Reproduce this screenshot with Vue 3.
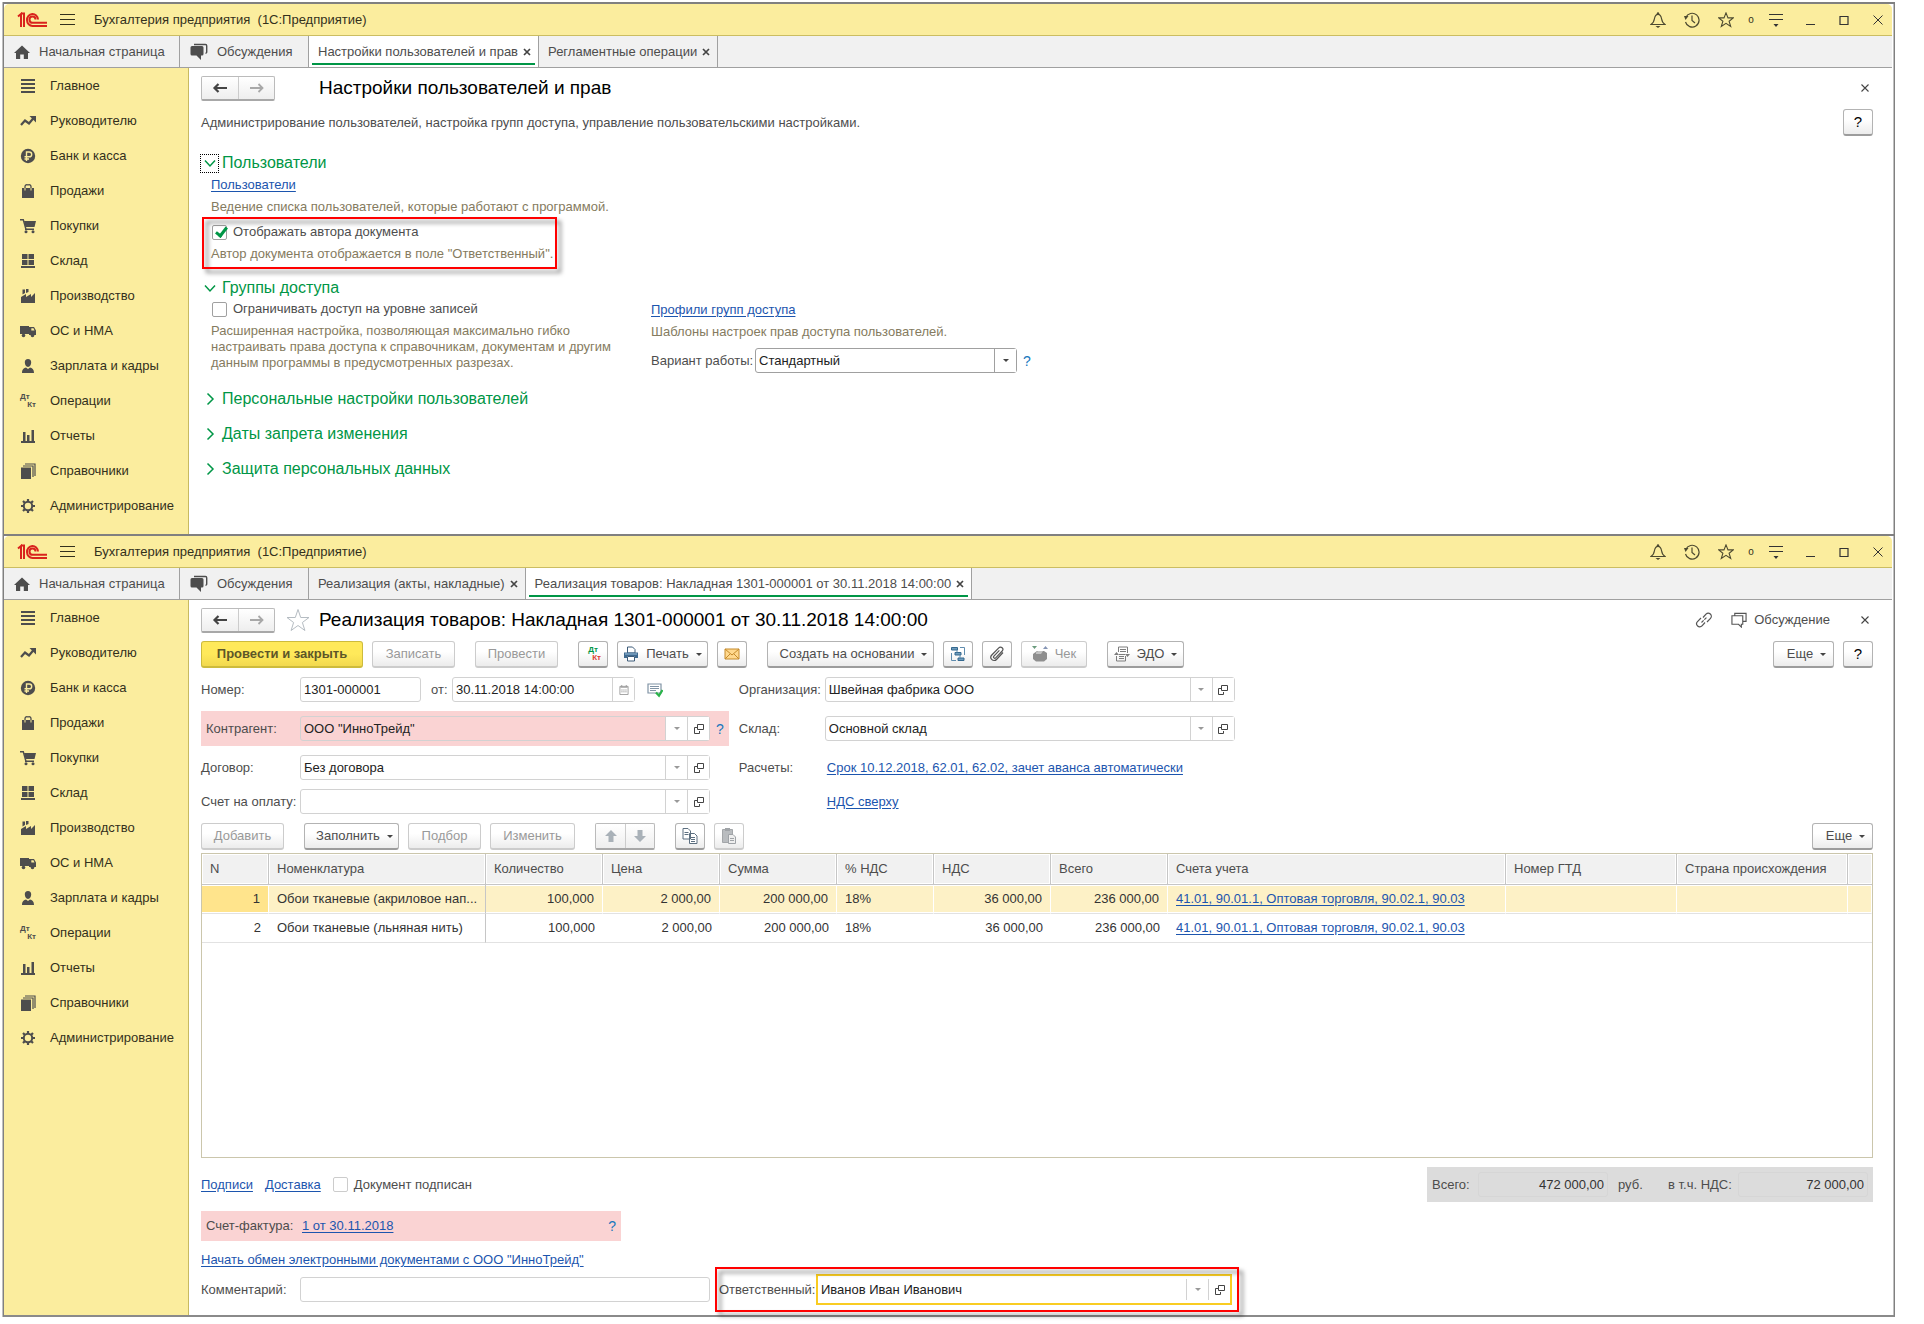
<script setup>
const sections = [
  { icon: 'lines', text: 'Главное' },
  { icon: 'trend', text: 'Руководителю' },
  { icon: 'ruble', text: 'Банк и касса' },
  { icon: 'bag', text: 'Продажи' },
  { icon: 'cart', text: 'Покупки' },
  { icon: 'boxes', text: 'Склад' },
  { icon: 'factory', text: 'Производство' },
  { icon: 'truck', text: 'ОС и НМА' },
  { icon: 'person', text: 'Зарплата и кадры' },
  { icon: 'dtkt', text: 'Операции' },
  { icon: 'chart', text: 'Отчеты' },
  { icon: 'books', text: 'Справочники' },
  { icon: 'gear', text: 'Администрирование' },
]

const windows = [
  {
    id: 'settings',
    tabs: [
      { text: 'Начальная страница', icon: 'home' },
      { text: 'Обсуждения', icon: 'chat' },
      { text: 'Настройки пользователей и прав', closable: true, active: true },
      { text: 'Регламентные операции', closable: true },
    ],
  },
  {
    id: 'document',
    tabs: [
      { text: 'Начальная страница', icon: 'home' },
      { text: 'Обсуждения', icon: 'chat' },
      { text: 'Реализация (акты, накладные)', closable: true },
      { text: 'Реализация товаров: Накладная 1301-000001 от 30.11.2018 14:00:00', closable: true, active: true },
    ],
  },
]

const tools = ['bell', 'history', 'star']
const controls = ['service', 'minimize', 'maximize', 'close']

const collapsed = ['Персональные настройки пользователей', 'Даты запрета изменения', 'Защита персональных данных']

const leftFields = [
  { id: 'partner', label: 'Контрагент:', value: 'ООО "ИнноТрейд"', alert: true },
  { id: 'contract', label: 'Договор:', value: 'Без договора' },
  { id: 'invoice', label: 'Счет на оплату:', value: '' },
]
const rightFields = [
  { id: 'org', label: 'Организация:', value: 'Швейная фабрика ООО' },
  { id: 'store', label: 'Склад:', value: 'Основной склад' },
]

const columns = [
  { title: 'N', width: 67 },
  { title: 'Номенклатура', width: 217 },
  { title: 'Количество', width: 117 },
  { title: 'Цена', width: 117 },
  { title: 'Сумма', width: 117 },
  { title: '% НДС', width: 97 },
  { title: 'НДС', width: 117 },
  { title: 'Всего', width: 117 },
  { title: 'Счета учета', width: 338 },
  { title: 'Номер ГТД', width: 171 },
  { title: 'Страна происхождения', width: 171 },
  { title: '', width: 24 },
]
const accounts = '41.01, 90.01.1, Оптовая торговля, 90.02.1, 90.03'
const rows = [
  { n: 1, name: 'Обои тканевые (акриловое нап...', selected: true },
  { n: 2, name: 'Обои тканевые (льняная нить)' },
]
</script>

<template>
  <svg class="sprite" aria-hidden="true">
    <symbol id="logo" viewBox="0 0 30 16">
      <g fill="none" stroke="#d9231d" stroke-width="2">
        <path d="M1 4.500L4 2h0v13" />
        <path d="M4 1.500h3V15" />
        <path d="M21 7.500a5.500 6 0 1 0-5.500 6.500H30" />
        <path d="M18.500 7.500a3 3.200 0 1 0-3 3.300H30" />
      </g>
    </symbol>
    <symbol id="lines" viewBox="0 0 16 16"><path fill="#4d4d4d" d="M1 1h14v2H1zM1 5h14v2H1zM1 9h14v2H1zM1 13h14v2H1z" /></symbol>
    <symbol id="trend" viewBox="0 0 16 16">
      <path d="M1 12l4-4.500 4 3 5-6" fill="none" stroke="#4d4d4d" stroke-width="2.200" /><path fill="#4d4d4d" d="M9.500 3H16v6.500z" />
    </symbol>
    <symbol id="ruble" viewBox="0 0 16 16">
      <circle cx="8" cy="8" r="7.200" fill="#4d4d4d" />
      <path d="M6.500 13V4h2.800a2.300 2.300 0 0 1 0 4.800H4.500M4.500 11H9" fill="none" stroke="#faec9d" stroke-width="1.400" />
    </symbol>
    <symbol id="bag" viewBox="0 0 16 16">
      <path fill="#4d4d4d" d="M2 5h12v10H2z" /><path d="M5 7V3.500a2 2 0 0 1 3-1.500 2 2 0 0 1 3 1.500V7" fill="none" stroke="#4d4d4d" stroke-width="1.300" />
      <path d="M5 5v2.500M11 5v2.500" stroke="#faec9d" />
    </symbol>
    <symbol id="cart" viewBox="0 0 16 16">
      <path fill="#4d4d4d" d="M4 3h12l-1.500 6H5.500zM5 10.500h9V12H5z" /><path d="M0 1.800h3.300L6 11.500" fill="none" stroke="#4d4d4d" stroke-width="1.400" />
      <circle cx="6" cy="13.800" r="1.500" fill="#4d4d4d" /><circle cx="13" cy="13.800" r="1.500" fill="#4d4d4d" />
    </symbol>
    <symbol id="boxes" viewBox="0 0 16 16"><path fill="#4d4d4d" d="M2 1h5.500v5H2zM8.500 1H14v5H8.500zM2 7h5.500v5H2zM8.500 7H14v5H8.500zM1 13h14v2H1z" /></symbol>
    <symbol id="factory" viewBox="0 0 16 16"><path fill="#4d4d4d" d="M1 15V9l5-3v3l5-3v3l4-4v10zM2.500 1.500H5V5L2.500 6.500zM6 1h2.500v3L6 5z" /></symbol>
    <symbol id="truck" viewBox="0 0 16 16">
      <path fill="#4d4d4d" d="M0 3h9v8H0zM9 4h5l2 3.500V12H9z" /><path fill="#faec9d" d="M11.300 5.300h2.200l1 2.200h-3.200z" />
      <circle cx="3.500" cy="12.500" r="1.800" fill="#4d4d4d" /><circle cx="12.500" cy="12.500" r="1.800" fill="#4d4d4d" />
    </symbol>
    <symbol id="person" viewBox="0 0 16 16"><path fill="#4d4d4d" d="M8 1c2.200 0 3.200 1.500 3.200 3.300C11.200 6.500 10 9 8 9S4.800 6.500 4.800 4.300C4.800 2.500 5.800 1 8 1zM2 15c0-4 2-5 4-5.500L8 11l2-1.500c2 .5 4 1.500 4 5.500z" /></symbol>
    <symbol id="chart" viewBox="0 0 16 16"><path fill="#4d4d4d" d="M3 4h2.500v9H3zM7 7h2.500v6H7zM11.500 2H14v11h-2.500zM1 13h14v2H1z" /></symbol>
    <symbol id="books" viewBox="0 0 16 16"><path fill="#4d4d4d" d="M1 4.500h10V16H1z" /><path d="M3 3h10v11M5 1h10v12" fill="none" stroke="#4d4d4d" stroke-width="1.200" /></symbol>
    <symbol id="gear" viewBox="0 0 16 16">
      <circle cx="8" cy="8" r="4.200" fill="none" stroke="#4d4d4d" stroke-width="2" />
      <path d="M8 1v3M8 12v3M1 8h3M12 8h3M3 3l2 2M11 11l2 2M3 13l2-2M11 5l2-2" stroke="#4d4d4d" stroke-width="2.200" />
    </symbol>
    <symbol id="home" viewBox="0 0 16 16"><path fill="#4d4d4d" d="M8 1.500L16 9h-2v6H9.800v-4.500H6.200V15H2V9H0z" /></symbol>
    <symbol id="chat" viewBox="0 0 18 18">
      <path fill="#4d4d4d" d="M2 3h10a1.500 1.500 0 0 1 1.500 1.500V11A1.500 1.500 0 0 1 12 12.500h-1V17l-4.500-4.500H2A1.500 1.500 0 0 1 .5 11V4.500A1.500 1.500 0 0 1 2 3z" />
      <path d="M4 1.500h11.500A1.200 1.200 0 0 1 16.700 2.700V9a1.200 1.200 0 0 1-1.200 1.200" fill="none" stroke="#4d4d4d" stroke-width="1.400" />
    </symbol>
    <symbol id="bell" viewBox="0 0 16 16">
      <path d="M1 12.500c2.500-1.500 3-3 3.500-6C5 3.500 6 2.300 8 2.300s3 1.200 3.500 4.200c.5 3 1 4.500 3.500 6z" fill="none" stroke="#4d4a30" stroke-width="1.200" />
      <circle cx="8" cy="1.500" r="1.200" fill="#4d4a30" /><path fill="#4d4a30" d="M5.500 14h5L8 16z" />
    </symbol>
    <symbol id="history" viewBox="0 0 16 16">
      <path d="M1.800 5.500a6.900 6.900 0 1 1-.3 4.500" fill="none" stroke="#4d4a30" stroke-width="1.200" /><path d="M8 3.500V8.500l3 2.500" fill="none" stroke="#4d4a30" stroke-width="1.200" />
      <path fill="#4d4a30" d="M0 4h4.500L1.500 8z" />
    </symbol>
    <symbol id="star" viewBox="0 0 16 16"><path d="M8 .9l2 5h5.300l-4.200 3.300 1.600 5.300L8 11.400l-4.700 3.100 1.600-5.300L.7 5.900H6z" fill="none" stroke="#4d4a30" stroke-width="1.100" /></symbol>
    <symbol id="bigstar" viewBox="0 0 24 24"><path d="M12 1.500l2.700 8h8.300l-6.600 5 2.500 8-6.900-5-6.900 5 2.500-8-6.600-5h8.300z" fill="none" stroke="#b5bcc2" /></symbol>
    <symbol id="service" viewBox="0 0 16 16"><path fill="#333" d="M1 2h14v1H1zM1 7h14v1H1zM5.500 12h5L8 15z" /></symbol>
    <symbol id="minimize" viewBox="0 0 16 16"><path fill="#333" d="M4 12h9v1H4z" /></symbol>
    <symbol id="maximize" viewBox="0 0 16 16"><path d="M4 4.500h8v8H4z" fill="none" stroke="#333" stroke-width="1.200" /></symbol>
    <symbol id="close" viewBox="0 0 16 16"><path d="M3.500 3.500l9 9M12.500 3.500l-9 9" stroke="#333" /></symbol>
    <symbol id="x" viewBox="0 0 8 8"><path d="M1 1l6 6M7 1L1 7" stroke="#444" stroke-width="1.700" /></symbol>
    <symbol id="xthin" viewBox="0 0 8 8"><path d="M.5 .5l7 7M7.500 .5l-7 7" stroke="#444" stroke-width="1.100" /></symbol>
    <symbol id="back" viewBox="0 0 16 16"><path d="M2 8h13M6.500 4L2.500 8l4 4" fill="none" stroke="#444" stroke-width="2.200" /></symbol>
    <symbol id="forward" viewBox="0 0 16 16"><path d="M1 8h13M9.500 4l4 4-4 4" fill="none" stroke="#a8a8a8" stroke-width="1.800" /></symbol>
    <symbol id="down" viewBox="0 0 14 14"><path d="M2 4.500L7 10l5-5.500" fill="none" stroke="#009646" stroke-width="1.500" /></symbol>
    <symbol id="right" viewBox="0 0 14 14"><path d="M4.500 1.500L10 7l-5.500 5.500" fill="none" stroke="#009646" stroke-width="1.500" /></symbol>
    <symbol id="open" viewBox="0 0 10 10"><path d="M3.500 .5h6v5h-6zM3 3.500H.5v6h5V7" fill="none" stroke="#444" /></symbol>
    <symbol id="calendar" viewBox="0 0 10 11"><path d="M.5 1.500h9v9h-9z" fill="none" stroke="#999" /><path d="M1 2.500h8M2.500 0v2M7.500 0v2" stroke="#999" /><path d="M2 5.500h6M2 7.500h6" stroke="#999" stroke-dasharray="1.500 .7" /></symbol>
    <symbol id="posted" viewBox="0 0 16 14">
      <path d="M1 1h13v9H1z" fill="#fff" stroke="#8093a5" stroke-width="1.200" /><path d="M3 3.500h9M3 5.500h9M3 7.500h6" stroke="#8093a5" />
      <path d="M9 9.500l3 3.200L15.500 7" fill="none" stroke="#2ab34a" stroke-width="2.200" />
    </symbol>
    <symbol id="print" viewBox="0 0 16 16">
      <path d="M4.500 1h5l2.500 2.500V7h-7.500z" fill="#fff" stroke="#3d5b78" /><path fill="#3f6a90" d="M1 6.500h14V12h-3v-2H4v2H1z" /><path d="M4.500 10.500h7V15h-7z" fill="#fff" stroke="#3d5b78" />
      <path d="M2 8h12" stroke="#9cc0dd" />
    </symbol>
    <symbol id="mail" viewBox="0 0 16 12"><path d="M1 1h14v10H1z" fill="#ffd98e" stroke="#c58a2b" /><path d="M1 1l7 6 7-6M1 11l5-5M15 11l-5-5" fill="none" stroke="#c58a2b" /></symbol>
    <symbol id="tree" viewBox="0 0 16 16">
      <path fill="#6f9cbc" stroke="#34688f" d="M1.500 1.500h6v2.500h-6zM5 6.500h6v2.500H5zM8 12h6v2.500H8z" />
      <path d="M10 1.500h4.500V9M1.500 7v7.500H6M7 4v2.500M10 9v3" fill="none" stroke="#5f8cae" />
    </symbol>
    <symbol id="clip" viewBox="0 0 16 16"><path d="M14 6.500l-6.500 7a3.200 3.200 0 0 1-4.700-4.500l7-7.200a2.300 2.300 0 0 1 3.400 3.200l-6.500 6.800a1.200 1.200 0 0 1-1.800-1.700l5.500-5.800" fill="none" stroke="#555" stroke-width="1.200" /></symbol>
    <symbol id="receipt" viewBox="0 0 16 16">
      <path fill="#8f8f8f" d="M1 8l4-3h7l3 2v6l-3 2.500H4L1 13z" /><path fill="#c4c4c4" d="M4 6.500l2-1.500h5l-2 3H4z" /><path fill="#6b9b7d" d="M0 0h5L2.500 3z" /><path fill="#8595b5" d="M11 3h5l-2.500-3z" />
    </symbol>
    <symbol id="edo" viewBox="0 0 16 16">
      <path d="M4.500 6V1h9v6M2.500 10v5h9V10" fill="none" stroke="#7d7d7d" /><path d="M6 3.500h6M6 5.500h6M5 8.500h6M5 10.500h5M5 12.500h5" stroke="#7d7d7d" /><path fill="#7d7d7d" d="M0 9l2.500-3L5 9zM11 8h5l-2.500 3z" />
    </symbol>
    <symbol id="up" viewBox="0 0 12 14"><path fill="#a9b1b8" d="M6 1l6 6H8.500v6h-5V7H0z" /></symbol>
    <symbol id="dn" viewBox="0 0 12 14"><path fill="#a9b1b8" d="M6 13l6-6H8.500V1h-5v6H0z" /></symbol>
    <symbol id="copy" viewBox="0 0 16 16"><path d="M1 .5h5L8.500 3v8H1zM7.500 5.500h5L15 8v7.500H7.500z" fill="#fff" stroke="#5c6f80" /><path d="M2.500 4.500h4M2.500 6.500h4M9 9.500h4M9 11.500h4M9 13.500h4" stroke="#5c6f80" /></symbol>
    <symbol id="paste" viewBox="0 0 16 16"><path fill="#b9bcbf" stroke="#a3a6a9" d="M1.500 1.500h10v13h-10z" /><path fill="#9fa3a7" d="M4 0h5v3H4z" /><path d="M7.500 6.500h4.500L14.500 9v6.500h-7z" fill="#eee" stroke="#9fa3a7" /><path d="M9 10.500h4M9 12.500h4" stroke="#9fa3a7" /></symbol>
    <symbol id="link" viewBox="0 0 18 18">
      <path d="M8 6.500l3-3.300a3 3 0 0 1 4.500 4.200L12 11M10 11.500l-3 3.300a3 3 0 0 1-4.500-4.200L6 7" fill="none" stroke="#555" stroke-width="1.200" />
      <path d="M6.500 11.500l5-5" stroke="#555" stroke-width="1.200" stroke-dasharray="3 1" />
    </symbol>
    <symbol id="talk" viewBox="0 0 17 17"><path d="M1 4h11.500v9H11v3l-3-3H1zM4 4V1.500h12V10h-3.500" fill="none" stroke="#555" stroke-width="1.200" /></symbol>
  </svg>

  <div class="desk">
    <section v-for="win in windows" :key="win.id" class="window">
      <header class="titlebar">
        <svg class="logo"><use href="#logo" /></svg>
        <button class="flat burger" aria-label="Меню"><i></i><i></i><i></i></button>
        <span class="app-name">Бухгалтерия предприятия&nbsp; (1С:Предприятие)</span>
        <div class="tools">
          <button v-for="t in tools" :key="t" class="flat" :aria-label="t"><svg><use :href="'#' + t" /></svg></button>
          <span class="zero">o</span>
          <button v-for="t in controls" :key="t" class="flat" :aria-label="t"><svg><use :href="'#' + t" /></svg></button>
        </div>
      </header>

      <nav class="tabs">
        <div v-for="tab in win.tabs" :key="tab.text" class="tab" :class="[{ active: tab.active, pinned: tab.icon }, tab.icon && 'tab-' + tab.icon]">
          <svg v-if="tab.icon" :class="tab.icon"><use :href="'#' + tab.icon" /></svg>
          <span>{{ tab.text }}</span>
          <button v-if="tab.closable" class="flat" aria-label="Закрыть"><svg><use href="#x" /></svg></button>
        </div>
      </nav>

      <div class="body">
        <aside class="sections">
          <a v-for="s in sections" :key="s.text" href="#">
            <span v-if="s.icon === 'dtkt'" class="dtkt"><b>Дт</b><b>Кт</b></span>
            <svg v-else><use :href="'#' + s.icon" /></svg>
            <span>{{ s.text }}</span>
          </a>
        </aside>

        <main v-if="win.id === 'settings'" class="page">
          <div class="heading">
            <div class="nav"><button aria-label="Назад"><svg><use href="#back" /></svg></button><button aria-label="Вперед"><svg><use href="#forward" /></svg></button></div>
            <h1 class="no-star">Настройки пользователей и прав</h1>
            <button class="flat close" aria-label="Закрыть"><svg><use href="#xthin" /></svg></button>
          </div>
          <div class="intro">
            <p>Администрирование пользователей, настройка групп доступа, управление пользовательскими настройками.</p>
            <button class="btn help">?</button>
          </div>

          <h2 class="first"><span class="focus"><svg><use href="#down" /></svg></span>Пользователи</h2>
          <div class="group">
            <p><a href="#">Пользователи</a></p>
            <p class="hint">Ведение списка пользователей, которые работают с программой.</p>
            <div class="marked">
              <label class="check"><input type="checkbox" checked />Отображать автора документа</label>
              <p class="hint">Автор документа отображается в поле "Ответственный".</p>
            </div>
          </div>

          <h2 class="second-head"><span><svg><use href="#down" /></svg></span>Группы доступа</h2>
          <div class="group split">
            <div class="restrict">
              <label class="check"><input type="checkbox" />Ограничивать доступ на уровне записей</label>
              <p class="hint long">Расширенная настройка, позволяющая максимально гибко настраивать права доступа к справочникам, документам и другим данным программы в предусмотренных разрезах.</p>
            </div>
            <div class="profiles">
              <p><a href="#">Профили групп доступа</a></p>
              <p class="hint">Шаблоны настроек прав доступа пользователей.</p>
              <div class="variant">
                <label for="variant">Вариант работы:</label>
                <div class="field strong">
                  <select id="variant"><option>Стандартный</option></select>
                  <span class="side"><i class="caret"></i></span>
                </div>
                <span class="q">?</span>
              </div>
            </div>
          </div>
          <h2 v-for="c in collapsed" :key="c" class="closed"><span><svg><use href="#right" /></svg></span>{{ c }}</h2>
        </main>

        <main v-else class="page">
          <div class="heading">
            <div class="nav"><button aria-label="Назад"><svg><use href="#back" /></svg></button><button aria-label="Вперед"><svg><use href="#forward" /></svg></button></div>
            <svg class="bigstar"><use href="#bigstar" /></svg>
            <h1>Реализация товаров: Накладная 1301-000001 от 30.11.2018 14:00:00</h1>
            <svg class="chain"><use href="#link" /></svg>
            <button class="flat talk"><svg><use href="#talk" /></svg>Обсуждение</button>
            <button class="flat close" aria-label="Закрыть"><svg><use href="#xthin" /></svg></button>
          </div>

          <div class="toolbar commands">
            <button class="btn primary">Провести и закрыть</button>
            <button class="btn w83" disabled>Записать</button>
            <button class="btn w83 gap" disabled>Провести</button>
            <button class="btn icon gap" aria-label="Проводки"><span class="dtkt color"><b>Дт</b><b>Кт</b></span></button>
            <button class="btn w91"><svg><use href="#print" /></svg>Печать<i class="caret"></i></button>
            <button class="btn icon" aria-label="Письмо"><svg><use href="#mail" /></svg></button>
            <button class="btn create menu gap">Создать на основании<i class="caret"></i></button>
            <button class="btn icon" aria-label="Структура"><svg><use href="#tree" /></svg></button>
            <button class="btn icon" aria-label="Файлы"><svg><use href="#clip" /></svg></button>
            <button class="btn w66" disabled><svg><use href="#receipt" /></svg>Чек</button>
            <button class="btn w77 gap"><svg><use href="#edo" /></svg>ЭДО<i class="caret"></i></button>
            <button class="btn more menu">Еще<i class="caret"></i></button>
            <button class="btn help">?</button>
          </div>

          <div class="form">
            <div class="column">
              <div class="row">
                <label for="number">Номер:</label>
                <div class="field number"><input id="number" value="1301-000001" /></div>
                <label for="date" class="from">от:</label>
                <div class="field date"><input id="date" value="30.11.2018 14:00:00" /><button class="side" aria-label="Календарь"><svg><use href="#calendar" /></svg></button></div>
                <svg class="posted"><use href="#posted" /></svg>
              </div>
              <div v-for="f in leftFields" :key="f.id" class="row" :class="{ alert: f.alert }">
                <label :for="f.id">{{ f.label }}</label>
                <div class="field wide">
                  <input :id="f.id" :value="f.value" />
                  <button class="side" aria-label="Выбрать"><i class="caret dim"></i></button>
                  <button class="side" aria-label="Открыть"><svg><use href="#open" /></svg></button>
                </div>
                <span v-if="f.alert" class="q">?</span>
              </div>
            </div>
            <div class="column second">
              <div v-for="f in rightFields" :key="f.id" class="row" :class="{ tall: f.id === 'store' }">
                <label :for="f.id">{{ f.label }}</label>
                <div class="field wide">
                  <input :id="f.id" :value="f.value" />
                  <button class="side" aria-label="Выбрать"><i class="caret dim"></i></button>
                  <button class="side" aria-label="Открыть"><svg><use href="#open" /></svg></button>
                </div>
              </div>
              <div class="row"><span class="caption">Расчеты:</span><a href="#">Срок 10.12.2018, 62.01, 62.02, зачет аванса автоматически</a></div>
              <div class="row"><span class="caption"></span><a href="#">НДС сверху</a></div>
            </div>
          </div>

          <div class="toolbar">
            <button class="btn w83" disabled>Добавить</button>
            <button class="btn w95 menu gap">Заполнить<i class="caret"></i></button>
            <button class="btn w73" disabled>Подбор</button>
            <button class="btn w85" disabled>Изменить</button>
            <div class="pair gap"><button disabled aria-label="Вверх"><svg><use href="#up" /></svg></button><button disabled aria-label="Вниз"><svg><use href="#dn" /></svg></button></div>
            <button class="btn icon gap" aria-label="Копировать"><svg><use href="#copy" /></svg></button>
            <button class="btn icon" disabled aria-label="Вставить"><svg><use href="#paste" /></svg></button>
            <button class="btn more menu">Еще<i class="caret"></i></button>
          </div>

          <div class="grid">
            <table>
              <colgroup><col v-for="c in columns" :key="c.title" :style="{ width: c.width + 'px' }" /></colgroup>
              <thead><tr><th v-for="c in columns" :key="c.title">{{ c.title }}</th></tr></thead>
              <tbody>
                <tr v-for="r in rows" :key="r.n" :class="{ selected: r.selected }">
                  <td class="num">{{ r.n }}</td>
                  <td class="name">{{ r.name }}</td>
                  <td class="num">100,000</td>
                  <td class="num">2 000,00</td>
                  <td class="num">200 000,00</td>
                  <td>18%</td>
                  <td class="num">36 000,00</td>
                  <td class="num">236 000,00</td>
                  <td><a href="#">{{ accounts }}</a></td>
                  <td></td>
                  <td></td>
                  <td></td>
                </tr>
              </tbody>
            </table>
          </div>

          <div class="summary">
            <a href="#">Подписи</a>
            <a href="#">Доставка</a>
            <label class="check pale"><input type="checkbox" />Документ подписан</label>
            <div class="totals">
              <label for="total">Всего:</label>
              <input id="total" value="472 000,00" readonly />
              <span class="currency">руб.</span>
              <label for="vat">в т.ч. НДС:</label>
              <input id="vat" value="72 000,00" readonly />
            </div>
          </div>

          <div class="factura"><span class="caption">Счет-фактура:</span><a href="#">1 от 30.11.2018</a><span class="q">?</span></div>
          <p class="exchange"><a href="#">Начать обмен электронными документами с ООО "ИнноТрейд"</a></p>
          <div class="row last">
            <label for="comment">Комментарий:</label>
            <div class="field wide"><input id="comment" value="" /></div>
            <div class="responsible">
              <label for="author">Ответственный:</label>
              <div class="field focused">
                <input id="author" value="Иванов Иван Иванович" />
                <button class="side" aria-label="Выбрать"><i class="caret dim"></i></button>
                <button class="side" aria-label="Открыть"><svg><use href="#open" /></svg></button>
              </div>
            </div>
          </div>
        </main>
      </div>
    </section>
  </div>
</template>

<style>
body {
  margin: 0;
  background: #fff;
}
</style>

<style scoped>
* {
  box-sizing: border-box;
}
.sprite {
  position: absolute;
  width: 0;
  height: 0;
}
.desk {
  padding: 2px 29px 7px 3px;
  font: 13px/16px "Liberation Sans", Arial, sans-serif;
  color: #4d4d4d;
}
.window {
  border: 1px solid #808080;
  border-top-width: 2px;
  border-bottom: 0;
  padding-right: 2px;
  box-shadow: -1px 0 #c0c0c0, inset -1px 0 #c0c0c0;
}
.window:last-child {
  border-bottom: 2px solid #8a8a8a;
}
button,
input,
select {
  font: inherit;
  color: inherit;
}
button {
  padding: 0;
}
p,
h1,
h2 {
  margin: 0;
  font-weight: normal;
}
svg {
  display: block;
  width: 16px;
  height: 16px;
  flex: none;
}
a {
  color: #1c55ae;
  text-underline-offset: 2px;
}
.flat {
  border: 0;
  background: none;
}

.titlebar {
  display: flex;
  align-items: center;
  height: 32px;
  padding: 0 6px 0 13px;
  background: #fbed9e;
  border-bottom: 1px solid #cbbd62;
  border-radius: 5px 5px 0 0;
  color: #33301c;
}
.logo {
  width: 30px;
}
.burger {
  display: flex;
  flex-direction: column;
  gap: 4px;
  width: 15px;
  margin: 0 19px 0 13px;
}
.burger i {
  height: 1px;
  background: #33301c;
}
.tools {
  display: flex;
  align-items: center;
  gap: 18px;
  margin-left: auto;
}
.zero {
  width: 8px;
  margin: 0 -5px;
  font-size: 10px;
  text-align: center;
}
.tabs {
  display: flex;
  height: 32px;
  background: #f1f1f1;
  border-bottom: 1px solid #a0a0a0;
}
.tab {
  display: flex;
  align-items: center;
  gap: 5px;
  padding: 0 7px 0 9px;
  border-right: 1px solid #a0a0a0;
  white-space: nowrap;
}
.tab.pinned {
  gap: 9px;
  padding: 0 0 0 10px;
}
.tab-home {
  width: 176px;
}
.tab-chat {
  width: 129px;
}
.tab .chat {
  width: 18px;
  height: 18px;
}
.tab .flat svg {
  width: 8px;
  height: 8px;
}
.tab.active {
  position: relative;
  background: #fff;
}
.tab.active::after {
  content: "";
  position: absolute;
  left: 3px;
  right: 3px;
  bottom: 2px;
  height: 2px;
  background: #009646;
}

.body {
  display: flex;
}
.sections {
  flex: none;
  width: 185px;
  padding: 0 0 11px;
  background: #fbed9e;
  border-right: 1px solid #c8ba60;
}
.sections a {
  display: flex;
  align-items: center;
  gap: 14px;
  height: 35px;
  padding-left: 16px;
  color: #33301c;
  text-decoration: none;
  white-space: nowrap;
}
.dtkt {
  display: flex;
  flex-direction: column;
  width: 16px;
  font-size: 8px;
  line-height: 8px;
  color: #4d4d4d;
}
.dtkt b:last-child {
  align-self: flex-end;
}
.dtkt.color b:first-child {
  color: #009646;
}
.dtkt.color b:last-child {
  color: #e03c31;
}

.page {
  flex: 1;
  min-width: 0;
  padding: 7px 19px 2px 12px;
}
.heading {
  display: flex;
  align-items: center;
  height: 26px;
}
.nav,
.pair {
  display: flex;
  height: 25px;
  border: 1px solid #bbb;
  border-bottom: 2px solid #a8a8a8;
  border-radius: 2px;
  background: linear-gradient(#fff, #eee);
}
.nav button,
.pair button {
  display: flex;
  align-items: center;
  justify-content: center;
  width: 36px;
  border: 0;
  background: none;
}
.nav button + button,
.pair button + button {
  border-left: 1px solid #ccc;
}
.pair {
  height: 27px;
}
.pair button {
  width: 29px;
}
.pair svg {
  width: 12px;
  height: 14px;
}
h1 {
  font-size: 19px;
  line-height: 24px;
  color: #000;
}
h1.no-star {
  margin-left: 44px;
}
.bigstar {
  width: 24px;
  height: 24px;
  margin: 0 9px 0 11px;
}
.heading .close {
  margin: 0 4px 0 auto;
}
.heading .close svg {
  width: 8px;
  height: 8px;
}
.chain {
  width: 18px;
  height: 18px;
  margin-left: auto;
}
.talk {
  display: flex;
  align-items: center;
  gap: 7px;
  margin-left: 18px;
}
.heading .talk + .close {
  margin-left: 31px;
}

.btn {
  display: flex;
  align-items: center;
  justify-content: center;
  gap: 7px;
  height: 27px;
  border: 1px solid #b3b3b3;
  border-bottom: 2px solid #9c9c9c;
  border-radius: 3px;
  background: linear-gradient(#fff 40%, #ececec);
  white-space: nowrap;
}
.btn.menu {
  padding-left: 6px;
}
.btn:disabled {
  color: #999;
  border-color: #ccc;
}
.btn.primary {
  width: 162px;
  border-color: #cdbb3c;
  background: linear-gradient(#ffe95a, #ffe95a 50%, #f2d94f);
  color: #5d5628;
  font-weight: bold;
}
.btn.help {
  width: 30px;
  color: #000;
  font-size: 15px;
}
.btn.icon {
  width: 30px;
}
.btn.more {
  width: 61px;
  margin-left: auto;
}
.btn.create {
  width: 167px;
}
.w66 { width: 66px; }
.w73 { width: 73px; }
.w77 { width: 77px; }
.w83 { width: 83px; }
.w85 { width: 85px; }
.w91 { width: 91px; }
.w95 { width: 95px; }
.caret {
  width: 0;
  border: 3px solid transparent;
  border-top-color: #444;
  border-bottom: 0;
}
.caret.dim {
  border-top-color: #999;
}

.intro {
  display: flex;
  justify-content: space-between;
  align-items: center;
  margin-top: 8px;
}
h2 {
  display: flex;
  align-items: center;
  height: 18px;
  font-size: 16px;
  line-height: 18px;
  color: #009646;
}
h2.first {
  margin-top: 18px;
}
h2.second-head {
  margin-top: 10px;
}
h2.closed {
  margin-top: 17px;
}
h2 span {
  display: flex;
  align-items: center;
  justify-content: center;
  width: 17px;
  height: 17px;
  margin-right: 4px;
}
h2 .focus {
  outline: 1px dotted #000;
}
h2 svg {
  width: 14px;
  height: 14px;
}
.group {
  padding-left: 10px;
}
.group p {
  margin-top: 6px;
}
.group > p:first-child {
  margin-top: 5px;
}
.hint {
  color: #857b60;
}
.marked {
  position: relative;
  width: 346px;
  padding: 9px 0 7px;
}
.marked .hint {
  white-space: nowrap;
}
.marked::after,
.responsible::after {
  content: "";
  position: absolute;
  inset: 2px 0 0 -9px;
  border: 2px solid #f00;
  filter: drop-shadow(4px 4px 2px rgba(0, 0, 0, 0.5));
  pointer-events: none;
}
.check {
  display: flex;
  align-items: center;
  gap: 6px;
  height: 16px;
}
.check input {
  appearance: none;
  display: grid;
  width: 15px;
  height: 15px;
  margin: 0 0 0 1px;
  border: 1px solid #a0a0a0;
  border-radius: 2px;
  background: #fff;
}
.check.pale input {
  border-color: #ccc;
}
.check input:checked::after {
  content: "";
  width: 4px;
  height: 9px;
  margin: -1px 0 0 5px;
  border: solid #009646;
  border-width: 0 3px 3px 0;
  transform: rotate(38deg);
}
.split {
  display: flex;
  padding-top: 4px;
}
.restrict {
  width: 440px;
}
.long {
  width: 410px;
}
.group .profiles p:first-child {
  margin-top: 1px;
}
.variant {
  display: flex;
  align-items: center;
  margin-top: 8px;
}
.variant label {
  width: 104px;
}
.q {
  color: #1878bd;
  font-size: 14px;
}
.variant .q {
  margin-left: 6px;
}
.field {
  display: flex;
  height: 25px;
  border: 1px solid #d2d2d2;
  border-radius: 3px;
}
.field input,
.field select {
  flex: 1;
  min-width: 0;
  padding: 0 3px;
  border: 0;
  outline: 0;
  background: none;
  color: #222;
  appearance: none;
}
.side {
  display: flex;
  align-items: center;
  justify-content: center;
  width: 22px;
  border: 0;
  border-left: 1px solid #d2d2d2;
  background: #fff;
}
.side svg {
  width: 10px;
  height: 10px;
}
.strong {
  width: 262px;
  border-color: #a0a0a0;
}
.strong .side {
  border-color: #a0a0a0;
}

.toolbar {
  display: flex;
  gap: 9px;
}
.commands {
  margin-top: 8px;
}
.toolbar .gap {
  margin-left: 11px;
}
.form {
  display: flex;
  padding: 9px 0;
}
.column {
  display: flex;
  flex-direction: column;
  gap: 9px;
}
.second {
  margin-left: 10px;
}
.row {
  display: flex;
  align-items: center;
  height: 25px;
}
.row > label {
  flex: none;
  width: 99px;
}
.row.alert {
  height: 35px;
  padding: 0 5px;
  background: #fad3d3;
}
.row.alert > label {
  width: 94px;
}
.row.alert .q {
  margin-left: 6px;
}
.row.tall {
  height: 35px;
}
.second .row > label {
  width: 86px;
}
.caption {
  width: 88px;
}
.wide {
  width: 410px;
}
.number {
  width: 121px;
}
.row > .from {
  width: 31px;
  padding-left: 10px;
}
.date {
  width: 183px;
}
.posted {
  margin-left: 12px;
}

.grid {
  min-height: 305px;
  margin-top: 3px;
  border: 1px solid #cbc6ac;
}
table {
  width: 100%;
  table-layout: fixed;
  border-collapse: separate;
  border-spacing: 0;
}
th {
  height: 31px;
  padding: 0 8px;
  border-right: 1px solid #c6c6c6;
  border-bottom: 1px solid #c6c6c6;
  background: #f1f1f1;
  box-shadow: inset 0 0 0 1px #fff;
  font-weight: normal;
  text-align: left;
}
td {
  height: 29px;
  padding: 0 8px;
  border-bottom: 1px solid #e2e2e2;
  white-space: nowrap;
  color: #333;
}
th:last-child {
  border-right: 0;
}
.num {
  text-align: right;
}
.name {
  padding-right: 2px;
  border-right: 1px solid #c6c6c6;
}
.selected td {
  background: #fdf1c6;
  box-shadow: inset 0 -1px #fff, inset 0 1px #fff;
  border-right: 1px solid #fff;
}
.selected td:first-child {
  background: #ffe48c;
}
.selected .name {
  border-right-color: #c6c6c6;
}

.summary {
  display: flex;
  align-items: center;
  gap: 12px;
  height: 35px;
  margin-top: 9px;
}
.summary .check {
  margin-left: -1px;
}
.totals {
  display: flex;
  align-items: center;
  height: 35px;
  margin-left: auto;
  padding: 0 5px;
  background: #dcdcdc;
}
.totals input {
  width: 130px;
  height: 25px;
  padding: 0 3px;
  border: 1px solid #d6d6d6;
  border-radius: 3px;
  background: none;
  color: #333;
  text-align: right;
}
.totals label {
  width: 46px;
}
.currency {
  width: 60px;
  padding-left: 10px;
}
.totals .currency + label {
  width: 70px;
}
.factura {
  display: flex;
  align-items: center;
  width: 420px;
  height: 30px;
  margin-top: 9px;
  padding: 0 5px;
  background: #fad3d3;
}
.factura .caption {
  width: 96px;
}
.factura .q {
  margin-left: auto;
}
.exchange {
  margin: 11px 0 9px;
}
.row.last {
  margin-bottom: 11px;
}
.responsible {
  position: relative;
  display: flex;
  align-items: center;
  margin-left: 9px;
}
.responsible::after {
  inset: -7px -7px -7px -4px;
}
.responsible label {
  width: 97px;
}
.focused {
  width: 416px;
  height: 31px;
  border: 2px solid #f9cc22;
  border-radius: 0;
}
.focused .side {
  margin: 3px 0;
}
</style>
